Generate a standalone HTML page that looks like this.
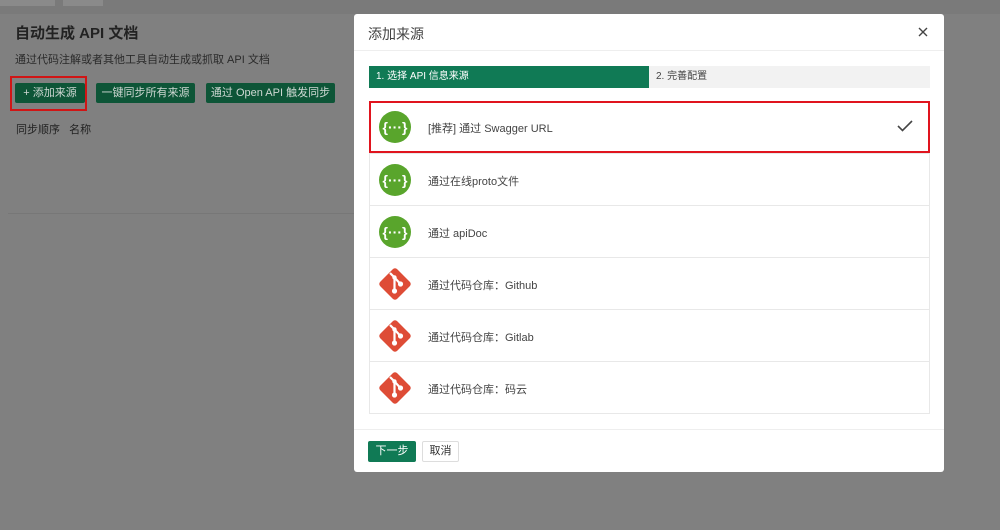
<!DOCTYPE html>
<html><head><meta charset="utf-8"><style>
*{box-sizing:border-box;margin:0;padding:0}
body{width:1000px;height:530px;overflow:hidden;background:#808080;font-family:"Liberation Sans","Noto Sans CJK SC",sans-serif;position:relative}
.abs{position:absolute}
.btn{position:absolute;height:20px;background:#0d5537;color:#cfd8d3;font-size:11px;line-height:20px;text-align:center;border-radius:2px;white-space:nowrap}
.modal{position:absolute;left:354px;top:14px;width:590px;height:458px;background:#fff;border-radius:3px}
.item{position:absolute;left:15px;width:561px;height:52px;border-top:1px solid #e8e8e8;font-size:11px;color:#444}
.item span{position:absolute;left:59px;top:19px}
.ic{position:absolute;left:8px;top:8px;width:36px;height:36px}
</style></head><body>
<div class="abs" style="left:0;top:0;width:1000px;height:14px;background:#7a7a7a"></div>
<div class="abs" style="left:0;top:0;width:55px;height:6px;background:#8a8a8a"></div>
<div class="abs" style="left:63px;top:0;width:40px;height:6px;background:#8a8a8a"></div>
<div class="abs" style="left:8px;top:14px;width:992px;height:516px;background:#808080"></div>
<div class="abs" style="left:8px;top:134px;width:346px;height:80px;border-bottom:1px solid #777"></div>
<div class="abs" style="left:15px;top:22px;font-size:15px;font-weight:bold;color:#222">自动生成 API 文档</div>
<div class="abs" style="left:15px;top:51px;font-size:11px;color:#2a2a2a">通过代码注解或者其他工具自动生成或抓取 API 文档</div>
<div class="abs" style="left:10px;top:76px;width:77px;height:35px;border:2px solid #d01515"></div>
<div class="btn" style="left:15px;top:83px;width:70px">+ 添加来源</div>
<div class="btn" style="left:96px;top:83px;width:99px">一键同步所有来源</div>
<div class="btn" style="left:206px;top:83px;width:129px">通过 Open API 触发同步</div>
<div class="abs" style="left:16px;top:121px;font-size:11px;color:#222">同步顺序 &nbsp;&nbsp;名称</div>
<div class="modal">
 <div class="abs" style="left:14px;top:10px;font-size:14px;color:#444">添加来源</div>
 <svg class="abs" style="left:564px;top:13px" width="10" height="10" viewBox="0 0 10 10"><path d="M1 1L9 9M9 1L1 9" stroke="#444" stroke-width="1.4"/></svg>
 <div class="abs" style="left:0;top:36px;width:590px;border-top:1px solid #eee"></div>
 <div class="abs" style="left:15px;top:52px;width:561px;height:22px;background:#f2f2f2"></div>
 <div class="abs" style="left:15px;top:52px;width:280px;height:22px;background:#107a55;color:#fff;font-size:10px;line-height:22px;padding-left:7px">1. 选择 API 信息来源</div>
 <div class="abs" style="left:302px;top:52px;font-size:10px;line-height:22px;color:#444">2. 完善配置</div>
 <div class="abs" style="left:15px;top:87px;width:561px;height:313px;border:1px solid #e8e8e8"></div>
 <div class="item" style="top:87px;border:none"><svg class="ic" viewBox="0 0 36 36"><circle cx="18" cy="18" r="16" fill="#59a52c"/><text x="18" y="23" fill="#fff" font-size="14" font-weight="bold" text-anchor="middle" font-family="Liberation Sans">{···}</text></svg><span>[推荐] 通过 Swagger URL</span><svg class="abs" style="left:528px;top:19px" width="16" height="12" viewBox="0 0 16 12"><path d="M1 6l4.5 4.5L15 1" stroke="#444" stroke-width="1.6" fill="none"/></svg></div>
 <div class="item" style="top:139px"><svg class="ic" viewBox="0 0 36 36"><circle cx="18" cy="18" r="16" fill="#59a52c"/><text x="18" y="23" fill="#fff" font-size="14" font-weight="bold" text-anchor="middle" font-family="Liberation Sans">{···}</text></svg><span>通过在线proto文件</span></div>
 <div class="item" style="top:191px"><svg class="ic" viewBox="0 0 36 36"><circle cx="18" cy="18" r="16" fill="#59a52c"/><text x="18" y="23" fill="#fff" font-size="14" font-weight="bold" text-anchor="middle" font-family="Liberation Sans">{···}</text></svg><span>通过 apiDoc</span></div>
 <div class="item" style="top:243px"><svg class="ic" viewBox="0 0 36 36"><rect x="6" y="6" width="24" height="24" rx="3" transform="rotate(45 18 18)" fill="#de4c36"/><path d="M13 7l4.5 4.5v13M17.5 11.5l5.5 6" stroke="#fff" stroke-width="2.2" fill="none"/><circle cx="17.5" cy="11.5" r="2.2" fill="#fff"/><circle cx="17.5" cy="25" r="2.6" fill="#fff"/><circle cx="23.5" cy="18" r="2.6" fill="#fff"/></svg><span>通过代码仓库：Github</span></div>
 <div class="item" style="top:295px"><svg class="ic" viewBox="0 0 36 36"><rect x="6" y="6" width="24" height="24" rx="3" transform="rotate(45 18 18)" fill="#de4c36"/><path d="M13 7l4.5 4.5v13M17.5 11.5l5.5 6" stroke="#fff" stroke-width="2.2" fill="none"/><circle cx="17.5" cy="11.5" r="2.2" fill="#fff"/><circle cx="17.5" cy="25" r="2.6" fill="#fff"/><circle cx="23.5" cy="18" r="2.6" fill="#fff"/></svg><span>通过代码仓库：Gitlab</span></div>
 <div class="item" style="top:347px"><svg class="ic" viewBox="0 0 36 36"><rect x="6" y="6" width="24" height="24" rx="3" transform="rotate(45 18 18)" fill="#de4c36"/><path d="M13 7l4.5 4.5v13M17.5 11.5l5.5 6" stroke="#fff" stroke-width="2.2" fill="none"/><circle cx="17.5" cy="11.5" r="2.2" fill="#fff"/><circle cx="17.5" cy="25" r="2.6" fill="#fff"/><circle cx="23.5" cy="18" r="2.6" fill="#fff"/></svg><span>通过代码仓库：码云</span></div>
 <div class="abs" style="left:15px;top:87px;width:561px;height:52px;border:2px solid #e0141e"></div>
 <div class="abs" style="left:0;top:415px;width:590px;border-top:1px solid #eee"></div>
 <div class="abs" style="left:14px;top:427px;width:48px;height:21px;background:#107a55;color:#fff;font-size:11px;line-height:21px;text-align:center;border-radius:2px">下一步</div>
 <div class="abs" style="left:68px;top:427px;width:37px;height:21px;border:1px solid #ddd;color:#333;font-size:11px;line-height:19px;text-align:center;border-radius:2px">取消</div>
</div>
</body></html>
